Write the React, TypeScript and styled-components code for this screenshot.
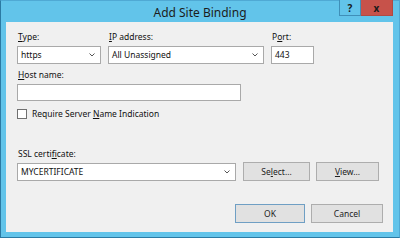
import React from 'react'
import styled, { createGlobalStyle } from 'styled-components'

const Global = createGlobalStyle`
  html, body { margin: 0; padding: 0; background: #fff; }
  body { font-family: "Noto Sans", "Open Sans", sans-serif; }
  * { box-sizing: border-box; }
`

const Frame = styled.div`
  width: 400px;
  height: 238px;
  background: #62c4ea;
  border-left: 1px solid #2b7aa3;
  border-bottom: 1px solid #2b7aa3;
  border-top: 1px solid #4fa9d4;
  border-right: 1px solid #4fa9d4;
  display: flex;
  flex-direction: column;
`

const TitleBar = styled.div`
  position: relative;
  height: 21px;
  display: flex;
  align-items: center;
  justify-content: center;
  font-size: 12px;
  color: #1c1c1c;
  padding-top: 1px;
`

const Captions = styled.div`
  position: absolute;
  top: -1px;
  right: 6px;
  display: flex;
`

const CapBtn = styled.div<{ $close?: boolean }>`
  width: ${p => (p.$close ? 32 : 22)}px;
  height: 16px;
  display: flex;
  align-items: center;
  justify-content: center;
  font-size: 10px;
  font-weight: 700;
  color: #1a1a1a;
  background: ${p => (p.$close ? '#c7524a' : '#62c4ea')};
  border: 1px solid ${p => (p.$close ? '#b04a43' : '#3f8fb8')};
  border-top: none;
  ${p => (p.$close ? 'border-left: none;' : '')}
`

const Client = styled.div`
  flex: 1;
  margin: 0 6px 5px 5px;
  background: #f0f0f0;
  padding: 9px 10px 0 11px;
  display: flex;
  flex-direction: column;
  font-size: 8.5px;
  color: #111;
`

const Row = styled.div<{ $gap?: number; $top?: number }>`
  display: flex;
  align-items: flex-end;
  gap: ${p => p.$gap ?? 6}px;
  margin-top: ${p => p.$top ?? 0}px;
`

const Field = styled.div<{ $w: number }>`
  width: ${p => p.$w}px;
  display: flex;
  flex-direction: column;
  gap: 3px;
`

const Label = styled.div`
  line-height: 12px;
  padding-left: 1px;
  u { text-decoration: underline; text-underline-offset: 1px; }
`

const Box = styled.div<{ $h?: number }>`
  height: ${p => p.$h ?? 18}px;
  background: #fff;
  border: 1px solid #a9a9a9;
  display: flex;
  align-items: center;
  padding: 0 5px 0 3px;
  justify-content: space-between;
  line-height: 1;
`

const Chevron = () => (
  <svg width="6" height="4" viewBox="0 0 6 4">
    <path d="M0.5 0.5 L3 3 L5.5 0.5" fill="none" stroke="#555" strokeWidth="1" />
  </svg>
)

const Check = styled.div`
  display: flex;
  align-items: center;
  gap: 5px;
  margin-top: 7px;
  line-height: 12px;
`

const CheckBox = styled.div`
  width: 10px;
  height: 10px;
  border: 1px solid #707070;
  background: #fff;
`

const Btn = styled.div<{ $w: number; $default?: boolean }>`
  width: ${p => p.$w}px;
  height: 19px;
  background: #e1e1e1;
  border: 1px solid ${p => (p.$default ? '#6f9fc4' : '#adadad')};
  display: flex;
  align-items: center;
  justify-content: center;
  color: #222;
  u { text-decoration: underline; text-underline-offset: 1px; }
`

const Footer = styled.div`
  display: flex;
  justify-content: flex-end;
  gap: 6px;
  margin-top: 23px;
`

export default function App() {
  return (
    <>
      <Global />
      <Frame>
        <TitleBar>
          Add Site Binding
          <Captions>
            <CapBtn>?</CapBtn>
            <CapBtn $close>x</CapBtn>
          </Captions>
        </TitleBar>
        <Client>
          <Row $gap={7}>
            <Field $w={84}>
              <Label><u>T</u>ype:</Label>
              <Box>https<Chevron /></Box>
            </Field>
            <Field $w={156}>
              <Label><u>I</u>P address:</Label>
              <Box>All Unassigned<Chevron /></Box>
            </Field>
            <Field $w={43}>
              <Label>P<u>o</u>rt:</Label>
              <Box>443</Box>
            </Field>
          </Row>
          <Row $top={5}>
            <Field $w={224}>
              <Label><u>H</u>ost name:</Label>
              <Box $h={17} />
            </Field>
          </Row>
          <Check>
            <CheckBox />
            <span>Require Server <u>N</u>ame Indication</span>
          </Check>
          <Row $top={28}>
            <Field $w={219}>
              <Label>SSL certi<u>f</u>icate:</Label>
              <Box>MYCERTIFICATE<Chevron /></Box>
            </Field>
            <Btn $w={67} style={{ marginLeft: 1 }}>Se<u>l</u>ect...</Btn>
            <Btn $w={63}><u>V</u>iew...</Btn>
          </Row>
          <Footer>
            <Btn $w={70} $default>OK</Btn>
            <Btn $w={72}>Cancel</Btn>
          </Footer>
        </Client>
      </Frame>
    </>
  )
}
